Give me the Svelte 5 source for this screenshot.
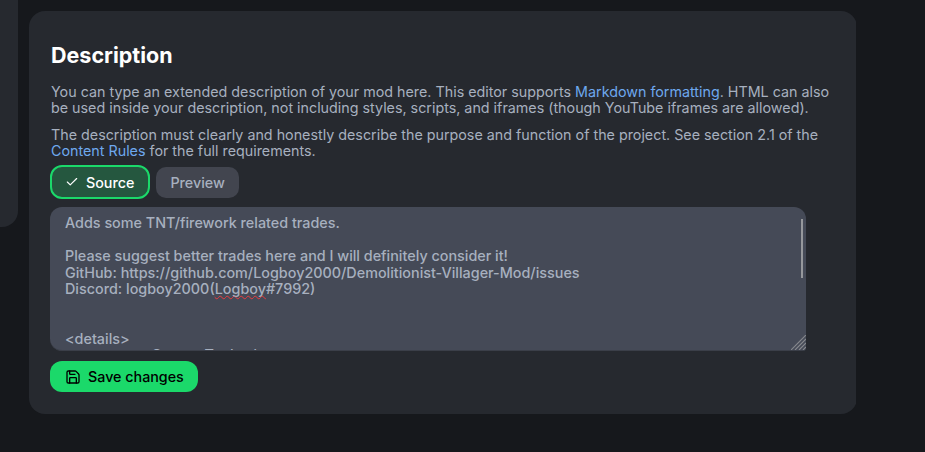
<script>
  const editorText = `Adds some TNT/firework related trades.

Please suggest better trades here and I will definitely consider it!
GitHub: https://github.com/Logboy2000/Demolitionist-Villager-Mod/issues
Discord: logboy2000(`;
</script>

<div class="page">
  <aside class="side"></aside>
  <main class="card">
    <h2>Description</h2>
    <p class="intro">You can type an extended description of your mod here. This editor supports <a href="#md">Markdown formatting</a>. HTML can also be used inside your description, not including styles, scripts, and iframes (though YouTube iframes are allowed).</p>
    <p class="rules">The description must clearly and honestly describe the purpose and function of the project. See section 2.1 of the <a href="#rules">Content Rules</a> for the full requirements.</p>
    <div class="tabs">
      <button class="tab active">
        <svg viewBox="0 0 24 24" width="14" height="14" fill="none" stroke="currentColor" stroke-width="2" stroke-linecap="round" stroke-linejoin="round"><path d="M20 6 9 17l-5-5"/></svg>
        Source
      </button>
      <button class="tab">Preview</button>
    </div>
    <div class="editor">
      <div class="text">{editorText}<span class="misspelt">Logboy</span>#7992)


&lt;details&gt;
 &lt;summary&gt;Source Tools&lt;/summary&gt;</div>
      <div class="thumb"></div>
      <svg class="grip" viewBox="0 0 15 15" width="15" height="15" stroke="#85878c" stroke-width="1.2"><path d="M0 15 15 0M4 15 15 4M8 15 15 8M12 15 15 12"/></svg>
    </div>
    <button class="save">
      <svg viewBox="0 0 24 24" width="16" height="16" fill="none" stroke="currentColor" stroke-width="2" stroke-linecap="round" stroke-linejoin="round"><path d="M15.2 3a2 2 0 0 1 1.4.6l3.8 3.8a2 2 0 0 1 .6 1.4V19a2 2 0 0 1-2 2H5a2 2 0 0 1-2-2V5a2 2 0 0 1 2-2z"/><path d="M17 21v-7a1 1 0 0 0-1-1H8a1 1 0 0 0-1 1v7"/><path d="M7 3v4a1 1 0 0 0 1 1h7"/></svg>
      Save changes
    </button>
  </main>
</div>

<style>
  :global(body) {
    margin: 0;
    background: #16181c;
    font-family: Inter, "Noto Sans", sans-serif;
    overflow: hidden;
  }
  .page {
    display: flex;
    align-items: flex-start;
    gap: 11px;
    height: 452px;
    width: 856px;
    overflow: hidden;
  }
  .side {
    flex: 0 0 18px;
    height: 227px;
    background: #26292f;
    border-radius: 0 0 16px 0;
  }
  .card {
    flex: 1;
    box-sizing: border-box;
    height: 403px;
    margin-top: 11px;
    padding: 32px 21px 0;
    background: #26292f;
    border-radius: 16px;
  }
  h2 {
    margin: 0 0 17px 1px;
    font-size: 21.5px;
    line-height: 24px;
    font-weight: 700;
    color: #ffffff;
  }
  p {
    margin: 0 0 0 1px;
    width: 785px;
    font-size: 14.3px;
    line-height: 16px;
    color: #a7b0bf;
  }
  .intro {
    margin-bottom: 11px;
  }
  a {
    color: #6ea8ee;
    text-decoration: none;
  }
  .tabs {
    display: flex;
    gap: 6px;
    margin-top: 6px;
    align-items: center;
  }
  .tab {
    display: flex;
    align-items: center;
    gap: 6px;
    height: 31px;
    box-sizing: border-box;
    padding: 0 14px;
    border: none;
    border-radius: 10px;
    background: #42454f;
    color: #a7b0bf;
    font: 500 14.3px Inter, sans-serif;
  }
  .tab.active {
    height: 34px;
    padding: 0 14px 0 13px;
    gap: 7px;
    border: 2px solid #1bd96a;
    border-radius: 12px;
    background: #25573f;
    color: #fff;
  }
  .editor {
    position: relative;
    box-sizing: border-box;
    width: 756px;
    height: 144px;
    margin-top: 8px;
    background: #454a57;
    border-radius: 12px 12px 3px 12px;
    overflow: hidden;
    border-bottom: 1px solid #3b3f49;
  }
  .text {
    padding: 8px 15px 0;
    font-size: 14.37px;
    line-height: 16.55px;
    font-weight: 500;
    color: #a7b0bf;
    white-space: pre-wrap;
  }
  .misspelt {
    text-decoration: underline wavy #ea3a3f 1.2px;
    text-decoration-skip-ink: none;
  }
  .thumb {
    position: absolute;
    top: 12px;
    right: 3px;
    width: 2px;
    height: 59px;
    background: #96989c;
  }
  .grip {
    position: absolute;
    right: 0;
    bottom: 0;
  }
  .save {
    display: flex;
    align-items: center;
    gap: 7px;
    height: 31px;
    margin-top: 10px;
    padding: 0 14px 0 15px;
    border: none;
    border-radius: 12px;
    background: #1bd96a;
    color: #000;
    font: 500 14.3px Inter, sans-serif;
  }
</style>
